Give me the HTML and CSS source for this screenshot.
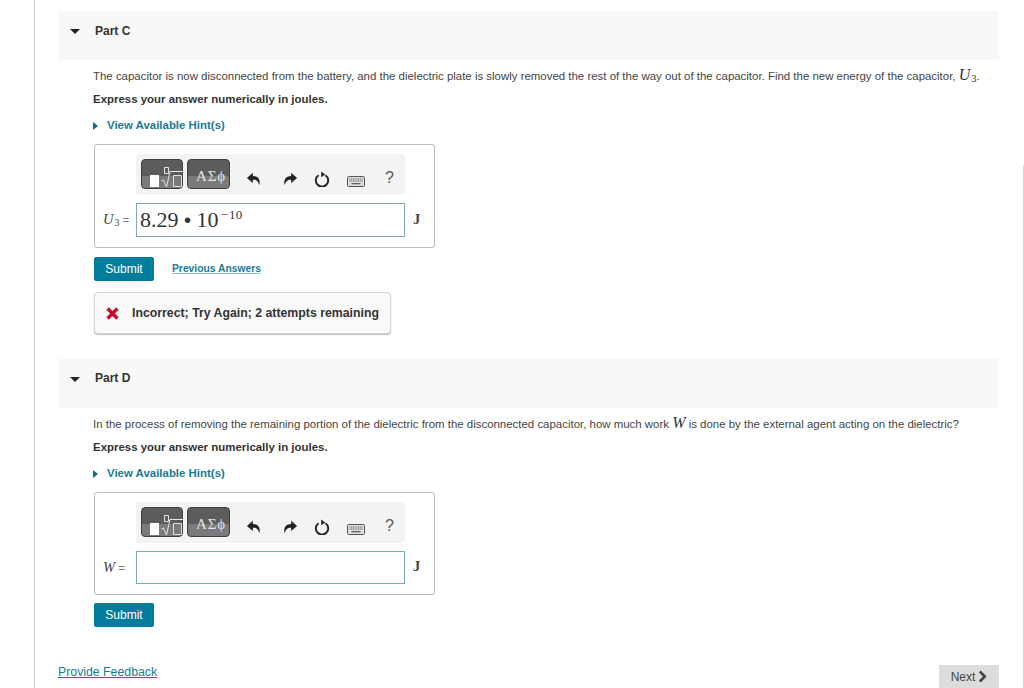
FILE: index.html
```html
<!DOCTYPE html>
<html lang="en">
<head>
<meta charset="utf-8">
<title>Part C and D</title>
<link rel="stylesheet" href="styles.css">
</head>
<body>
<svg class="defs" width="0" height="0" aria-hidden="true">
  <symbol id="undo" viewBox="0 0 14 14"><path d="M6 1.500 0.800 6.200 6 10.600V7.700c2.800-.2 4.600.8 5.600 4.800 1.300-4.800-.8-8.200-5.600-8.200z"/></symbol>
  <symbol id="redo" viewBox="0 0 14 14"><path d="M8 1.500 13.200 6.200 8 10.600V7.700c-2.800-.2-4.600.8-5.600 4.800C1.100 7.700 3.200 4.300 8 4.300z"/></symbol>
  <symbol id="reset" viewBox="0 0 16 16"><path d="M4.600 4.200a6.200 6.200 0 1 0 6.800 0" fill="none" stroke="currentColor" stroke-width="1.900"/><path d="M7.200 0.500v5.800L11.200 3.400z"/></symbol>
  <symbol id="kbd" viewBox="0 0 18 11"><rect x=".5" y=".5" width="17" height="10" rx="1" fill="#dedede" stroke="#555"/><path d="M2.500 3h13M2.500 5h13" stroke="#555" stroke-dasharray="1 .7"/><path d="M4.500 7.700h9" stroke="#555" stroke-width="1.200"/></symbol>
</svg>
<div class="page">
  <main class="content">
    <section class="part part-c">
      <header class="part-head">
        <span class="caret"></span><h2 class="part-title">Part C</h2>
      </header>
      <div class="part-body">
        <p class="prompt">The capacitor is now disconnected from the battery, and the dielectric plate is slowly removed the rest of the way out of the capacitor. Find the new energy of the capacitor, <span class="math">U<sub>3</sub></span>.</p>
        <p class="instruction">Express your answer numerically in joules.</p>
        <a class="hint" href="#"><span class="hint-caret"></span>View Available Hint(s)</a>
        <div class="answer">
          <div class="toolbar">
            <button class="tool-btn tool-templates" type="button" aria-label="Templates">
              <span class="tpl-block"></span>
              <svg class="tpl-root" width="27" height="22" viewBox="0 0 27 22"><path d="M3.500 .5h4v6h-4zM.5 14l2-1 3 7L9 4.500h15" fill="none" stroke="#e6e6e6"/><path d="M12.500 8.500h8v11h-8z" fill="none" stroke="#ddd"/></svg>
            </button>
            <button class="tool-btn tool-greek" type="button">ΑΣϕ</button>
            <svg class="ico ico-undo"><use href="#undo"/></svg>
            <svg class="ico ico-redo"><use href="#redo"/></svg>
            <svg class="ico ico-reset"><use href="#reset"/></svg>
            <svg class="ico-kbd"><use href="#kbd"/></svg>
            <span class="help">?</span>
          </div>
          <div class="answer-row">
            <label class="answer-label"><span class="math">U<sub>3</sub></span> <span class="eq">=</span></label>
            <div class="field"><span class="value">8.29 <span class="dot">•</span> 10<sup><span class="minus">−</span>10</sup></span></div>
            <span class="unit">J</span>
          </div>
        </div>
        <div class="actions">
          <button class="submit" type="button">Submit</button>
          <a class="previous" href="#">Previous Answers</a>
        </div>
        <div class="feedback">
          <svg class="x-mark" width="13" height="13" viewBox="0 0 13 13"><path d="M1.600 1.600 11.400 11.400M11.400 1.600 1.600 11.400" stroke="#c8102e" stroke-width="3.500"/></svg>
          <span>Incorrect; Try Again; 2 attempts remaining</span>
        </div>
      </div>
    </section>

    <section class="part part-d">
      <header class="part-head">
        <span class="caret"></span><h2 class="part-title">Part D</h2>
      </header>
      <div class="part-body">
        <p class="prompt">In the process of removing the remaining portion of the dielectric from the disconnected capacitor, how much work <span class="math math-w">W</span> is done by the external agent acting on the dielectric?</p>
        <p class="instruction">Express your answer numerically in joules.</p>
        <a class="hint" href="#"><span class="hint-caret"></span>View Available Hint(s)</a>
        <div class="answer">
          <div class="toolbar">
            <button class="tool-btn tool-templates" type="button" aria-label="Templates">
              <span class="tpl-block"></span>
              <svg class="tpl-root" width="27" height="22" viewBox="0 0 27 22"><path d="M3.500 .5h4v6h-4zM.5 14l2-1 3 7L9 4.500h15" fill="none" stroke="#e6e6e6"/><path d="M12.500 8.500h8v11h-8z" fill="none" stroke="#ddd"/></svg>
            </button>
            <button class="tool-btn tool-greek" type="button">ΑΣϕ</button>
            <svg class="ico ico-undo"><use href="#undo"/></svg>
            <svg class="ico ico-redo"><use href="#redo"/></svg>
            <svg class="ico ico-reset"><use href="#reset"/></svg>
            <svg class="ico-kbd"><use href="#kbd"/></svg>
            <span class="help">?</span>
          </div>
          <div class="answer-row">
            <label class="answer-label"><span class="math">W</span> <span class="eq">=</span></label>
            <div class="field"></div>
            <span class="unit">J</span>
          </div>
        </div>
        <div class="actions">
          <button class="submit" type="button">Submit</button>
        </div>
      </div>
    </section>

    <footer class="foot">
      <a class="provide" href="#">Provide Feedback</a>
      <a class="next" href="#">Next <svg width="9" height="13" viewBox="0 0 9 13"><path d="M1.800 1.500 6.800 6.500 1.800 11.500" fill="none" stroke="#444" stroke-width="2.600"/></svg></a>
    </footer>
  </main>
  <div class="right-rule"></div>
</div>
</body>
</html>
```
FILE: styles.css
```css
* { box-sizing: border-box; }
html, body { margin: 0; height: 688px; overflow: hidden; background: #fff; }
body { font-family: "Liberation Sans", Arial, sans-serif; color: #333; }
.defs { position: absolute; }
.page { display: flex; height: 688px; margin-left: 34px; border-left: 1px solid #c5d2d8; }
.content { width: 964px; padding: 11px 0 0 23px; display: flex; flex-direction: column; flex: none; }
.right-rule { width: 1px; margin: 165px 0 0 24px; background: #d8d8d8; flex: none; }

.part-d { margin-top: 25px; }
.part-head { height: 49px; width: 941px; background: #f8f8f8; position: relative; padding: 13px 0 0 37px; }
.part-d .part-head { padding-top: 12px; }
.caret { position: absolute; left: 12px; top: 18px; width: 0; height: 0; border-left: 5px solid transparent; border-right: 5px solid transparent; border-top: 5px solid #222; }
.part-title { margin: 0; font-size: 12px; line-height: 14px; font-weight: bold; color: #333; }

.part-body { padding-left: 35px; }
.prompt { margin: 0; height: 33px; padding-top: 8px; font-size: 11.45px; line-height: 16px; color: #444; white-space: nowrap; }
.math { font-family: "Liberation Serif", serif; font-style: italic; font-size: 16px; line-height: 14px; color: #333; }
.math sub { font-size: 10.5px; font-style: normal; line-height: 0; vertical-align: -2px; margin-left: 1px; }
.instruction { margin: 0; height: 26px; font-size: 11.45px; line-height: 13px; font-weight: bold; color: #333; }
.hint { display: flex; align-items: center; gap: 9px; height: 13px; font-size: 11.45px; line-height: 13px; font-weight: bold; color: #1a7a94; text-decoration: none; }
.hint-caret { width: 0; height: 0; border-top: 4.5px solid transparent; border-bottom: 4.5px solid transparent; border-left: 5px solid #0f6a84; }

.answer { width: 341px; margin: 12px 0 0 1px; border: 1px solid #bbb; border-radius: 3px; padding: 9px 29px 10px 41px; }
.toolbar { width: 269px; height: 41px; background: #f3f3f3; border-radius: 4px; position: relative; display: flex; padding: 5px 0 0 5px; gap: 4px; }
.tool-btn { height: 30px; padding: 5px 0 0; border: 1px solid #3f3f3f; border-radius: 4px; background: linear-gradient(#5c5c5c 0 56%, #7a7a7a 56% 100%); position: relative; color: #e4e4e4; font-family: "Liberation Serif", serif; font-size: 15px; letter-spacing: .8px; }
.tool-templates { width: 42px; }
.tool-greek { width: 43px; padding-left: 5px; }
.tpl-block { position: absolute; left: 8px; top: 15px; width: 9px; height: 12px; background: #fff; }
.tpl-root { position: absolute; left: 19px; top: 7px; }
.ico { position: absolute; width: 16px; height: 16px; fill: #222; color: #222; }
.ico-undo { left: 110px; top: 17px; }
.ico-redo { left: 146px; top: 17px; }
.ico-reset { left: 178px; top: 17px; width: 16px; height: 16px; }
.ico-kbd { position: absolute; left: 211px; top: 22px; width: 18px; height: 11px; }
.help { position: absolute; left: 249px; top: 15px; font-size: 16px; line-height: 18px; color: #555; }

.answer-row { display: flex; align-items: center; height: 34px; margin-top: 8px; position: relative; }
.part-d .answer-row { height: 33px; }
.answer-label { position: absolute; left: -33px; width: 31px; font-size: 12px; color: #555; white-space: nowrap; padding-bottom: 1px; }
.answer-label .math { color: #444; font-size: 14.5px; }
.answer-label sub { font-size: 10px; }
.eq { font-size: 11px; font-family: "Liberation Sans", sans-serif; color: #777; }
.field { width: 269px; height: 100%; border: 1px solid #7fa9b5; background: #fff; flex: none; font-family: "Liberation Serif", serif; font-size: 22px; color: #333; padding-left: 3px; line-height: 32px; }
.value { position: relative; }
.value sup { font-size: 13px; line-height: 0; position: relative; top: 0; margin-left: 2px; vertical-align: super; letter-spacing: .2px; }
.minus { margin-right: 1px; }
.dot { font-size: 20px; font-family: "Liberation Sans", sans-serif; }
.unit { margin-left: 8px; padding-bottom: 2px; font-family: "Liberation Serif", serif; font-weight: bold; font-size: 14.5px; color: #444; }

.actions { display: flex; align-items: center; gap: 18px; margin: 9px 0 0 1px; height: 24px; }
.part-d .actions { margin-top: 8px; }
.submit { width: 60px; height: 24px; padding: 0 0 1px; border: 0; border-radius: 2px; background: #007c9c; color: #fff; font-family: "Liberation Sans", sans-serif; font-size: 12px; }
.previous { font-size: 10.3px; margin-bottom: 2px; font-weight: bold; color: #1a7a94; text-decoration: underline; text-decoration-color: #8cc0cf; }

.feedback { width: 297px; height: 42px; margin: 11px 0 0 1px; border: 1px solid #d5d5d5; border-radius: 4px; background: #f9f9f9; box-shadow: 0 1px 1px #bbb; display: flex; align-items: center; gap: 13px; padding-left: 11px; font-size: 12.3px; font-weight: bold; color: #333; white-space: nowrap; }
.x-mark { flex: none; }

.foot { display: flex; justify-content: space-between; align-items: flex-end; width: 941px; margin-top: 38px; }
.provide { font-size: 12.3px; line-height: 14px; color: #1a7a94; text-decoration: underline; margin-bottom: 9px; }
.next { width: 60px; height: 23px; background: #dcdcdc; color: #444; font-size: 12px; text-decoration: none; display: flex; align-items: center; justify-content: center; gap: 3px; }
```
